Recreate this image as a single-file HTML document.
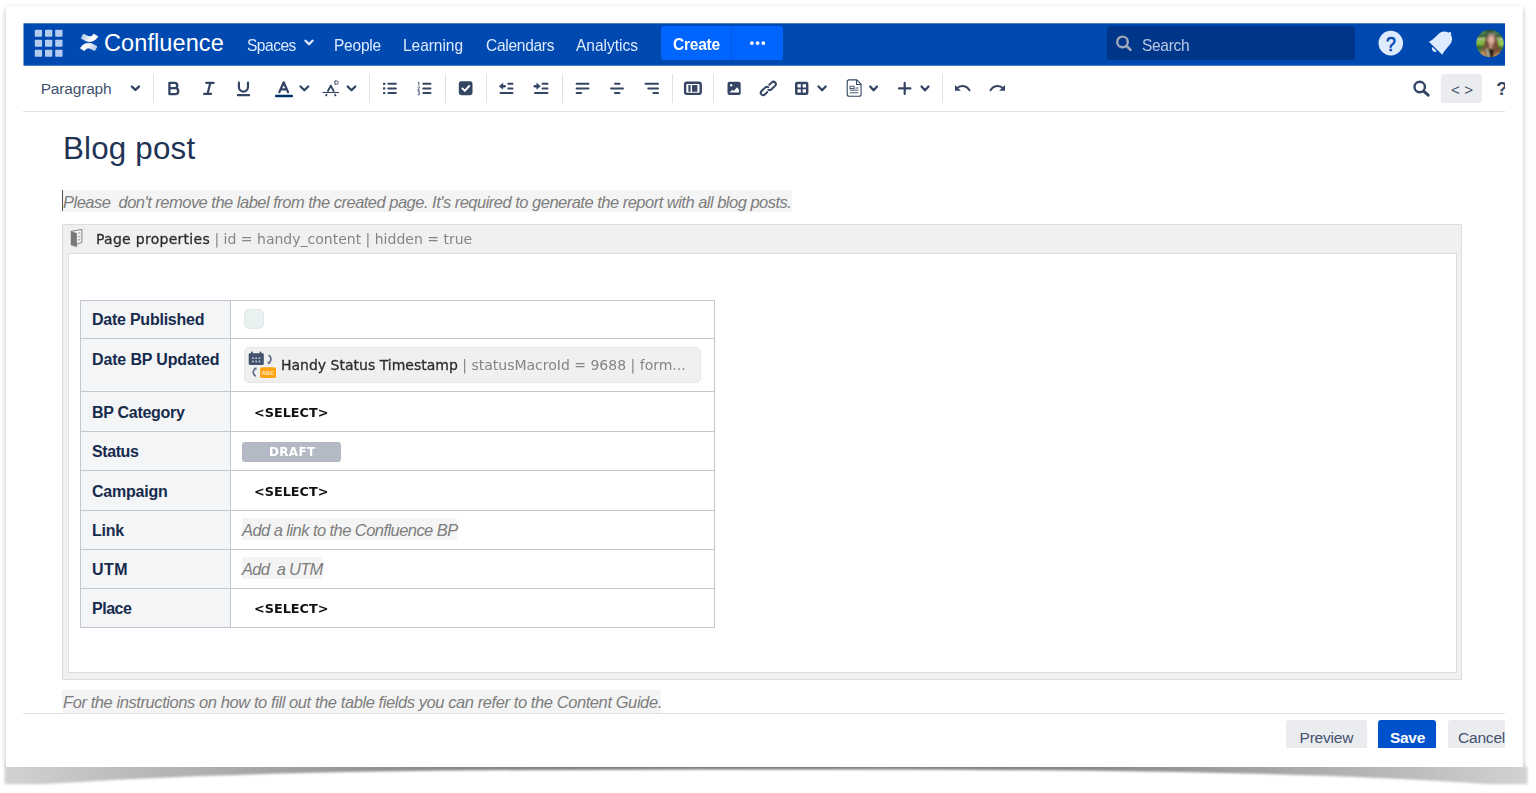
<!DOCTYPE html>
<html lang="en">
<head>
<meta charset="utf-8">
<title>Blog post - Confluence</title>
<style>
html,body{margin:0;padding:0;background:#fff;}
body{width:1536px;height:793px;overflow:hidden;position:relative;font-family:"Liberation Sans",sans-serif;color:#172b4d;}
.abs{position:absolute;}
#card{position:absolute;left:6px;top:6px;width:1517px;height:761px;background:#fff;box-shadow:0 2px 5px rgba(0,0,0,.27);clip-path:inset(-10px -10px 0 -10px);}
#curve{position:absolute;left:0;top:760px;width:1536px;height:33px;}
#shot{position:absolute;left:23px;top:23px;width:1482px;height:725px;overflow:hidden;background:#fff;}
#pg{position:absolute;left:-23px;top:-23px;width:1536px;height:793px;}
#pg *{box-sizing:border-box;}
#pg div,#pg span,#pg svg{position:absolute;white-space:nowrap;}
/* nav */
#nav{left:23px;top:23px;width:1482px;height:42px;background:#0049b0;}
.nv{color:#deebff;font-size:17px;top:35.5px;line-height:20px;transform:scaleX(.912);transform-origin:0 50%;}
/* toolbar */
#tbline{left:23px;top:111px;width:1482px;height:1px;background:#dfe1e6;}
.sep{width:1px;top:74px;height:29px;background:#dfe1e6;}
.ic{fill:none;stroke:#344563;stroke-width:2;}
/* content */
.ph{color:#7d7d7d;font-style:italic;font-size:16px;line-height:22px;background:#f4f5f7;letter-spacing:-0.27px;}
.th{left:80px;width:151px;background:#f4f5f7;border:1px solid #c1c7d0;border-right:none;border-bottom:none;}
.td{left:230px;width:485px;border:1px solid #c1c7d0;border-bottom:none;}
.hr{left:80px;width:635px;height:1px;background:#c1c7d0;}
.thl{font-weight:bold;font-size:16px;left:92px;color:#172b4d;line-height:20px;letter-spacing:-0.35px;}
.sel{font-family:"DejaVu Sans",sans-serif;font-weight:bold;font-size:12.8px;color:#111;left:253.7px;line-height:16px;will-change:transform;}
</style>
</head>
<body>
<svg id="curve" viewBox="0 760 1536 33"><defs><linearGradient id="cg" x1="5" x2="1527" y1="0" y2="0" gradientUnits="userSpaceOnUse"><stop offset="0" stop-color="#d2d2d2"/><stop offset="0.1" stop-color="#b6b6b6"/><stop offset="0.3" stop-color="#858585"/><stop offset="0.5" stop-color="#7a7a7a"/><stop offset="0.7" stop-color="#858585"/><stop offset="0.9" stop-color="#b6b6b6"/><stop offset="1" stop-color="#d2d2d2"/></linearGradient><filter id="cb" x="-1%" y="-50%" width="102%" height="200%"><feGaussianBlur stdDeviation="1.3"/></filter></defs><path d="M6 762 H1522.500 V766.500 H1527.500 V784.300 H1490 C1300 770.500 1032 769.400 766 769.400 S232 770.500 42 784.300 H4.500 V766.500 H6 Z" fill="url(#cg)" filter="url(#cb)"/></svg>
<div id="card"></div>
<div id="shot"><div id="pg">

<!-- NAV -->
<svg style="left:20px;top:20px;width:1490px;height:50px" viewBox="20 20 1490 50"><rect x="23.500" y="23.300" width="1481.700" height="42.400" fill="#0049b0"/></svg>
<svg style="left:34px;top:29px;width:30px;height:29px" viewBox="0 0 30 29"><g fill="#b3cbef">
<rect x="0.8" y="0.8" width="7.3" height="7" rx="0.8"/><rect x="11" y="0.8" width="7.3" height="7" rx="0.8"/><rect x="21.2" y="0.8" width="7.3" height="7" rx="0.8"/>
<rect x="0.8" y="10.8" width="7.3" height="7" rx="0.8"/><rect x="11" y="10.8" width="7.3" height="7" rx="0.8"/><rect x="21.2" y="10.8" width="7.3" height="7" rx="0.8"/>
<rect x="0.8" y="20.8" width="7.3" height="7" rx="0.8"/><rect x="11" y="20.8" width="7.3" height="7" rx="0.8"/><rect x="21.2" y="20.8" width="7.3" height="7" rx="0.8"/></g></svg>
<svg style="left:74px;top:28px;width:32px;height:30px" viewBox="74 28 32 30"><defs><linearGradient id="lg1" x1="80.500" y1="35" x2="91" y2="39.500" gradientUnits="userSpaceOnUse"><stop offset="0" stop-color="#fff" stop-opacity=".62"/><stop offset="1" stop-color="#fff"/></linearGradient></defs>
<path id="rb" fill="url(#lg1)" stroke="url(#lg1)" stroke-width=".7" stroke-linejoin="round" d="M83.500 34.100 C85.500 35.200 88 36.700 90 36.700 C91.700 36.700 92.800 35.400 93.700 34.100 L97.800 36.500 C96.700 38.500 94 41.600 89.500 41.600 C86.500 41.600 83.500 39.600 81.200 38.300 Z"/>
<use href="#rb" transform="rotate(180 89.100 42.400)"/></svg>
<span style="left:104px;top:28px;font-size:23.5px;line-height:30px;color:#fff;letter-spacing:0.1px">Confluence</span>
<span class="nv" style="left:246.7px;letter-spacing:-0.52px">Spaces</span>
<svg style="left:304px;top:39px;width:10px;height:8px" viewBox="0 0 10 8"><path d="M1.500 1.800 L5 5.200 L8.500 1.800" fill="none" stroke="#deebff" stroke-width="2.300" stroke-linecap="round" stroke-linejoin="round"/></svg>
<span class="nv" style="left:333.5px;letter-spacing:-0.25px">People</span>
<span class="nv" style="left:403.3px;letter-spacing:-0.05px">Learning</span>
<span class="nv" style="left:485.8px;letter-spacing:-0.30px">Calendars</span>
<span class="nv" style="left:576.4px;letter-spacing:0.00px">Analytics</span>
<div style="left:661px;top:26px;width:70.3px;height:34px;background:#0065ff;border-radius:3px 0 0 3px"></div>
<div style="left:731px;top:26px;width:51.700px;height:34px;background:#0065ff;border-radius:0 3px 3px 0;border-left:1px solid #0058de"></div>
<span class="nv" style="left:673px;top:34.900px;font-weight:bold;color:#fff;letter-spacing:-0.26px">Create</span>
<svg style="left:749px;top:40px;width:18px;height:6px" viewBox="0 0 18 6"><g fill="#fff"><circle cx="2.900" cy="3.100" r="1.900"/><circle cx="8.600" cy="3.100" r="1.900"/><circle cx="14.300" cy="3.100" r="1.900"/></g></svg>
<div style="left:1106.7px;top:26px;width:248px;height:34px;background:#00368a;border-radius:3px"></div>
<svg style="left:1115px;top:34px;width:18px;height:18px" viewBox="0 0 18 18"><circle cx="7.500" cy="7.900" r="5.300" fill="none" stroke="#9fa8bb" stroke-width="2.400"/><path d="M11.600 12 L15.500 15.900" stroke="#9fa8bb" stroke-width="2.700" stroke-linecap="round"/></svg>
<span class="nv" style="left:1142px;color:#bccae6;letter-spacing:-0.35px">Search</span>
<svg style="left:1376px;top:28px;width:30px;height:30px" viewBox="1376 28 30 30"><circle cx="1390.800" cy="43.100" r="12.300" fill="#deebff"/><text x="0" y="0" transform="translate(1390.800 50.800) scale(0.860 1)" text-anchor="middle" font-family="Liberation Sans, sans-serif" font-size="20.500" fill="#0049b0" stroke="#0049b0" stroke-width="0.700">?</text></svg>
<svg style="left:1424px;top:26px;width:34px;height:34px" viewBox="1424 26 34 34"><defs><clipPath id="clp"><rect x="-5" y="1.300" width="10" height="6"/></clipPath></defs><g transform="translate(1435.600 48.200) rotate(44) scale(0.970)" fill="#deebff"><path d="M-9.600 0 C-8.600 -3 -8.300 -6 -8.200 -9 L-8 -13 C-7.800 -17.500 -4.500 -21 0 -21 C4.500 -21 7.800 -17.500 8 -13 L8.200 -9 C8.300 -6 8.600 -3 9.600 0 Z"/><rect x="-1.500" y="-22.500" width="3" height="3" rx="1.200"/><circle cx="0" cy="0.900" r="3" clip-path="url(#clp)"/></g></svg>
<svg style="left:1475px;top:29px;width:30px;height:30px" viewBox="-1 -0.800 30 30"><defs><clipPath id="av"><circle cx="14" cy="13.700" r="13.700"/></clipPath><filter id="avb" x="-20%" y="-20%" width="140%" height="140%"><feGaussianBlur stdDeviation="0.8"/></filter></defs><g clip-path="url(#av)"><g filter="url(#avb)"><rect x="-2" y="-2" width="32" height="32" fill="#3d8a35"/><rect x="-2" y="-2" width="32" height="9.500" fill="#2b5536"/><rect x="3" y="1" width="7" height="4" fill="#4f8550"/><rect x="18" y="0" width="6" height="5" fill="#3f7a55"/><rect x="-2" y="8" width="32" height="2.500" fill="#b9c886"/><rect x="-2" y="10.500" width="32" height="5.500" fill="#84b944"/><rect x="20" y="11" width="9" height="5" fill="#9acb55"/><rect x="-2" y="15.500" width="9" height="4.500" fill="#3a6a33"/><rect x="22" y="17" width="8" height="5" fill="#3b7631"/>
<path d="M4.800 21 C8.500 17 8.800 9 11.200 6 C13 3.400 18 3.400 19.600 6 C22 9.500 21.500 14.500 25.300 20.500 C26 23 24 26 22 28.500 L6 28.500 C4.500 26 3.800 23 4.800 21 Z" fill="#6f4c36"/><path d="M12 5.300 C14 3.100 18 3.200 19.500 5.800" stroke="#9a9387" stroke-width="1.500" fill="none"/>
<path d="M4 28.500 C3.800 23.500 5.500 20 9.300 19 L11 28.500 Z" fill="#c89566"/><path d="M25 28.500 C25.300 24 23.500 21.500 19.800 20.800 L17 28.500 Z" fill="#c28c5c"/>
<path d="M7 21 C9 19 9.800 16 10.200 13 L11.500 19 L9 24 Z" fill="#7a553b"/><path d="M22.500 23 C21 20 20.500 17 20 13.500 L18.500 20 L20.500 25 Z" fill="#7a553b"/>
<path d="M9.800 28.500 L10.200 19.500 C12 17.800 16 17.800 17.300 19.800 L16.800 28.500 Z" fill="#12100e"/><path d="M13.200 14 h3.400 v4.500 C15.500 19.500 14 19.500 13.200 18.500 z" fill="#c6957b"/>
<ellipse cx="15.200" cy="9.900" rx="3.200" ry="4.400" fill="#e0b3a2"/><ellipse cx="15" cy="12.100" rx="1.200" ry=".6" fill="#d48a8a"/>
<path d="M10 19 L11.700 18.700 L14 28.500 L11.800 28.500 Z" fill="#d8cfab"/></g></g></svg>

<!-- TOOLBAR -->
<div id="tbline"></div>
<span style="left:40.700px;top:78.500px;font-size:15.500px;line-height:20px;color:#42526e;letter-spacing:-0.18px">Paragraph</span>
<svg style="left:130px;top:84px;width:11px;height:9px" viewBox="0 0 11 9"><path d="M1.900 2.600 L5.400 5.900 L8.900 2.600" fill="none" stroke="#344563" stroke-width="2.400" stroke-linecap="round" stroke-linejoin="round"/></svg>
<div class="sep" style="left:153px"></div>
<svg id="tbicons" style="left:0;top:68px;width:1536px;height:40px" viewBox="0 68 1536 40">
<path d="M169.400 82.800 V94.100 M169.400 82.800 H174.600 a2.700 2.700 0 0 1 0 5.400 H169.400 M169.400 88.200 H175.300 a2.950 2.950 0 0 1 0 5.900 H169.400" fill="none" stroke="#344563" stroke-width="2.300" stroke-linejoin="round" stroke-linecap="round"/>
<path d="M206.300 82.900 H213.600 M204.100 93.900 H211 M210.300 82.900 L207.500 93.900" stroke="#344563" stroke-width="2.200" stroke-linecap="round" fill="none"/>
<path d="M238.900 82.500 V87 a4.550 4.550 0 0 0 9.100 0 V82.500" stroke="#344563" stroke-width="2.200" stroke-linecap="round" fill="none"/><path d="M237.900 95.200 L249.100 95.200" stroke="#344563" stroke-width="2.200" stroke-linecap="round"/>
<path d="M279.300 92.200 L283.700 82.300 L288.100 92.200 M281 89.300 H286.400" stroke="#344563" stroke-width="2.200" stroke-linecap="round" stroke-linejoin="round" fill="none"/>
<rect x="275" y="94.700" width="18" height="2.600" rx="1" fill="#003366"/>
<path d="M300.5 86.500 L304.4 90.300 L308.2 86.500" fill="none" stroke="#344563" stroke-width="2.300" stroke-linecap="round" stroke-linejoin="round"/>
<path d="M327.600 91.600 L330.800 85.600 L334 91.600" stroke="#344563" stroke-width="1.900" stroke-linejoin="round" fill="none"/>
<path d="M325.800 96 L326.900 94.100 M334.700 94.100 L335.800 96" stroke="#344563" stroke-width="1.800" fill="none"/>
<path d="M322.500 92.500 H339" stroke="#344563" stroke-width="1.100"/>
<path d="M334.900 80.900 V84.300 M334.900 80.900 h1.500 a1.700 1.700 0 0 1 0 3.400 h-1.500" stroke="#344563" stroke-width="1" fill="none"/>
<path d="M347.7 86.500 L351.5 90.300 L355.3 86.500" fill="none" stroke="#344563" stroke-width="2.300" stroke-linecap="round" stroke-linejoin="round"/>
<rect x="383" y="82.7" width="2.300" height="2.200" rx="0.600" fill="#344563"/>
<path d="M388.3 83.8 L395.9 83.8" stroke="#344563" stroke-width="2" stroke-linecap="round"/>
<rect x="383" y="87.30000000000001" width="2.300" height="2.200" rx="0.600" fill="#344563"/>
<path d="M388.3 88.4 L395.9 88.4" stroke="#344563" stroke-width="2" stroke-linecap="round"/>
<rect x="383" y="91.9" width="2.300" height="2.200" rx="0.600" fill="#344563"/>
<path d="M388.3 93 L395.9 93" stroke="#344563" stroke-width="2" stroke-linecap="round"/>
<path d="M423.3 83.8 L430.5 83.8" stroke="#344563" stroke-width="2" stroke-linecap="round"/>
<path d="M423.3 88.4 L430.5 88.4" stroke="#344563" stroke-width="2" stroke-linecap="round"/>
<path d="M423.3 93 L430.5 93" stroke="#344563" stroke-width="2" stroke-linecap="round"/>
<g fill="none" stroke="#344563" stroke-width="0.900"><path d="M417.900 82.700 L418.900 82.200 V85.500"/><path d="M417.700 87.300 C418.200 86.500 419.700 86.600 419.600 87.600 C419.500 88.500 417.800 89.200 417.700 90.100 H419.800"/><path d="M417.700 91.700 C418.300 91 419.700 91.200 419.600 92.100 C419.500 92.900 418.600 93 418.600 93 C418.600 93 419.700 93.100 419.700 94 C419.700 95 418.200 95.200 417.600 94.400"/></g>
<rect x="458.800" y="81.300" width="13.700" height="13.900" rx="2.400" fill="#344563"/><path d="M462.300 88.400 L464.800 90.900 L469.200 86" stroke="#fff" stroke-width="1.900" fill="none" stroke-linecap="round" stroke-linejoin="round"/>
<path d="M508.3 83.8 L512.5 83.8" stroke="#344563" stroke-width="2" stroke-linecap="round"/><path d="M508.3 88.4 L512.5 88.4" stroke="#344563" stroke-width="2" stroke-linecap="round"/><path d="M500.5 93 L512.5 93" stroke="#344563" stroke-width="2" stroke-linecap="round"/>
<path d="M501.500 86.200 H504.600" stroke="#344563" stroke-width="2.400" stroke-linecap="round"/><path d="M499.300 86.200 L502.800 83.200 V89.200 Z" fill="#344563" stroke="#344563" stroke-width=".6" stroke-linejoin="round"/>
<path d="M542.5 83.8 L547.5 83.8" stroke="#344563" stroke-width="2" stroke-linecap="round"/><path d="M542.5 88.4 L547.5 88.4" stroke="#344563" stroke-width="2" stroke-linecap="round"/><path d="M535.0 93 L547.5 93" stroke="#344563" stroke-width="2" stroke-linecap="round"/>
<path d="M534.800 86.200 H537.500" stroke="#344563" stroke-width="2.400" stroke-linecap="round"/><path d="M540.300 86.200 L536.800 83.200 V89.200 Z" fill="#344563" stroke="#344563" stroke-width=".6" stroke-linejoin="round"/>
<path d="M576.6 83.8 L588.4 83.8" stroke="#344563" stroke-width="2" stroke-linecap="round"/><path d="M576.6 88.4 L588.4 88.4" stroke="#344563" stroke-width="2" stroke-linecap="round"/><path d="M576.6 93 L581.2 93" stroke="#344563" stroke-width="2" stroke-linecap="round"/>
<path d="M615.0 83.8 L619.5 83.8" stroke="#344563" stroke-width="2" stroke-linecap="round"/><path d="M611.1 88.4 L623.0 88.4" stroke="#344563" stroke-width="2" stroke-linecap="round"/><path d="M615.0 93 L619.5 93" stroke="#344563" stroke-width="2" stroke-linecap="round"/>
<path d="M645.5 83.8 L658.0 83.8" stroke="#344563" stroke-width="2" stroke-linecap="round"/><path d="M648.3 88.4 L658.0 88.4" stroke="#344563" stroke-width="2" stroke-linecap="round"/><path d="M653.3 93 L658.0 93" stroke="#344563" stroke-width="2" stroke-linecap="round"/>
<rect x="685.100" y="82.700" width="15.600" height="11.200" rx="1.800" fill="none" stroke="#344563" stroke-width="2.400"/><rect x="688.400" y="85.100" width="2.200" height="6.700" rx=".5" fill="#344563"/><rect x="692" y="85.100" width="5.400" height="6.700" rx=".5" fill="#344563"/>
<rect x="727.500" y="81.700" width="13.200" height="13.300" rx="2" fill="#344563"/><circle cx="731.200" cy="85.300" r="1.200" fill="#fff"/><path d="M729.500 92.600 L732.300 89.700 L733.800 91 L737 87.200 L738.900 89.500 V92.600 Z" fill="#fff"/>
<g fill="none" stroke="#344563" stroke-width="2" stroke-linecap="round"><path id="lk" transform="translate(771.500 85.900) rotate(-43)" d="M-0.800 -2.400 H2.600 a2.400 2.400 0 0 1 0 4.800 H-2.600 a2.400 2.400 0 0 1 -2.300 -1.700"/><use href="#lk" transform="rotate(180 768.300 88.400)"/></g>
<rect x="795" y="81.700" width="13.400" height="13.300" rx="2" fill="#344563"/><g fill="#fff"><rect x="797.500" y="84.200" width="3.300" height="3.300"/><rect x="802.700" y="84.200" width="3.300" height="3.300"/><rect x="797.500" y="89.300" width="3.300" height="3.300"/><rect x="802.700" y="89.300" width="3.300" height="3.300"/></g>
<path d="M818.5 86.500 L822.1 90.300 L825.7 86.500" fill="none" stroke="#344563" stroke-width="2.300" stroke-linecap="round" stroke-linejoin="round"/>
<path d="M849.200 79.900 H856.800 L861.100 84.200 V94.200 a2 2 0 0 1 -2 2 H849.200 a2 2 0 0 1 -2 -2 V81.900 a2 2 0 0 1 2 -2 Z M856.600 80.200 V84.500 H860.900" fill="none" stroke="#344563" stroke-width="1.100" stroke-linejoin="round"/><path d="M849.800 90.200 H858.400 M849.800 92.800 H858.400 M855.300 88 H858.400" stroke="#344563" stroke-width="0.900"/><rect x="850" y="86.200" width="4" height="2.400" fill="none" stroke="#344563" stroke-width="0.900"/>
<path d="M870.2 86.500 L873.6 90.300 L877.0 86.500" fill="none" stroke="#344563" stroke-width="2.300" stroke-linecap="round" stroke-linejoin="round"/>
<path d="M899 88.400 H910.400 M904.700 82.900 V94" stroke="#344563" stroke-width="2.200" stroke-linecap="round"/>
<path d="M921.5 86.500 L925.0 90.300 L928.5 86.500" fill="none" stroke="#344563" stroke-width="2.300" stroke-linecap="round" stroke-linejoin="round"/>
<path d="M956.300 88.800 C960.500 84.800 966 85 969.500 90.300" fill="none" stroke="#344563" stroke-width="2" stroke-linecap="round"/><path d="M955 85 V90.800 H960.800 Z" fill="#344563"/>
<path d="M1003.700 88.800 C999.500 84.800 994 85 990.500 90.300" fill="none" stroke="#344563" stroke-width="2" stroke-linecap="round"/><path d="M1005 85 V90.800 H999.200 Z" fill="#344563"/>
<circle cx="1419.700" cy="87" r="5.200" fill="none" stroke="#344563" stroke-width="2.400"/><path d="M1423.900 91.300 L1428.200 95.200" stroke="#344563" stroke-width="3" stroke-linecap="round"/>
</svg>
<div class="sep" style="left:369px"></div>
<div class="sep" style="left:445px"></div>
<div class="sep" style="left:486px"></div>
<div class="sep" style="left:562px"></div>
<div class="sep" style="left:672px"></div>
<div class="sep" style="left:713px"></div>
<div class="sep" style="left:942px"></div>
<div style="left:1441.300px;top:74px;width:40.400px;height:28.700px;background:#ebecf0;border-radius:3px"></div>
<span style="left:1451px;top:79.700px;font-size:15px;line-height:20px;color:#42526e;letter-spacing:4.500px">&lt;&gt;</span>
<span style="left:1496.300px;top:78.600px;font-size:18.500px;font-weight:bold;line-height:20px;color:#344563">?</span>

<!-- CONTENT -->
<span style="left:63px;top:129.300px;font-size:31.300px;line-height:40px;color:#1f3354;letter-spacing:0.2px">Blog post</span>
<div style="left:62px;top:190px;width:730px;height:22px;background:#f4f4f4"></div>
<span class="ph" style="left:63px;top:191px;background:none;font-size:16.500px;letter-spacing:-0.51px;white-space:pre">Please  don't remove the label from the created page. It's required to generate the report with all blog posts.</span>
<div style="left:62px;top:190px;width:1px;height:21px;background:#555"></div>
<!-- page properties macro -->
<div style="left:62px;top:224px;width:1400px;height:455.500px;background:#f0f0f0;border:1px solid #ddd"></div>
<div style="left:68px;top:253px;width:1389px;height:420px;background:#fff;border:1px solid #ddd"></div>
<svg style="left:68px;top:226px;width:18px;height:24px" viewBox="68 226 18 24"><path d="M71.300 231.300 L81.900 229.400 V242.500 L76.600 244.200 Z" fill="#f3f3f3" stroke="#858585" stroke-width="1" stroke-linejoin="round"/><path d="M71 231.200 L76.700 233.400 V246.800 L71 245.100 Z" fill="#787878" stroke="#787878" stroke-width=".5" stroke-linejoin="round"/><path d="M78.400 233.300 L80.300 232.900 M78.400 236.600 L80.300 236.300 M78.400 239.900 L80.300 239.600" stroke="#9a9a9a" stroke-width="1.100"/></svg>
<span style="left:95.500px;top:230.500px;font-family:'DejaVu Sans',sans-serif;font-size:14px;line-height:16px;color:#858585;will-change:transform"><b style="color:#2b2b2b;font-weight:normal;-webkit-text-stroke:0.28px #2f2f2f;letter-spacing:0.28px">Page properties</b> | id = handy_content | hidden = true</span>
<!-- table -->
<div style="left:80px;top:300px;width:635px;height:328px;border:1px solid #c1c7d0;background:#fff"></div>
<div style="left:80px;top:300px;width:151px;height:328px;background:#f4f5f7;border:1px solid #c1c7d0"></div>
<div class="hr" style="top:338px"></div><div class="hr" style="top:391px"></div><div class="hr" style="top:431px"></div><div class="hr" style="top:470px"></div><div class="hr" style="top:510px"></div><div class="hr" style="top:549px"></div><div class="hr" style="top:588px"></div>
<span class="thl" style="top:310px;letter-spacing:-0.24px">Date Published</span>
<span class="thl" style="top:350px;letter-spacing:-0.15px">Date BP Updated</span>
<span class="thl" style="top:403px;letter-spacing:-0.29px">BP Category</span>
<span class="thl" style="top:442px;letter-spacing:-0.42px">Status</span>
<span class="thl" style="top:482px;letter-spacing:-0.22px">Campaign</span>
<span class="thl" style="top:521px;letter-spacing:-0.27px">Link</span>
<span class="thl" style="top:560px;letter-spacing:0.500px">UTM</span>
<span class="thl" style="top:599px;letter-spacing:-0.48px">Place</span>
<div style="left:244px;top:309px;width:20px;height:20px;border-radius:5px;background:#e9f2f0;border:1px solid #e3e6ea"></div>
<div style="left:244px;top:347px;width:457px;height:36px;border-radius:5px;background:#f0f0f0;border:1px solid #e6e6e6"></div>
<span style="left:281px;top:357px;font-family:'DejaVu Sans',sans-serif;font-size:14px;line-height:16px;color:#858585;will-change:transform"><b style="color:#2b2b2b;font-weight:normal;-webkit-text-stroke:0.28px #2f2f2f">Handy Status Timestamp</b> | statusMacroId = 9688 | form...</span>
<svg style="left:246px;top:349px;width:32px;height:32px" viewBox="246 349 32 32"><g fill="#42526e"><rect x="248.700" y="353.200" width="15.100" height="11.700" rx="1.300"/><rect x="251" y="351.600" width="1.800" height="3.400" rx=".8"/><rect x="259.600" y="351.600" width="1.800" height="3.400" rx=".8"/></g>
<g fill="#c5cbd6"><rect x="252" y="357.300" width="1.700" height="1.700"/><rect x="255.300" y="357.300" width="1.700" height="1.700"/><rect x="258.600" y="357.300" width="1.700" height="1.700"/><rect x="252" y="360.600" width="1.700" height="1.700"/><rect x="255.300" y="360.600" width="1.700" height="1.700"/><rect x="258.600" y="360.600" width="1.700" height="1.700"/></g>
<path d="M268.600 355.200 C271.600 357 271.800 360.500 269.300 362.700" fill="none" stroke="#5e6c84" stroke-width="1.700"/><path d="M267.600 361.300 L271 363.200 L268 364.300 Z" fill="#5e6c84"/>
<path d="M255.800 376.300 C252.600 374.500 252.400 371 255 368.800" fill="none" stroke="#5e6c84" stroke-width="1.700"/><path d="M256.600 370.200 L253.300 368.300 L256.300 367.200 Z" fill="#5e6c84"/>
<rect x="260.100" y="367.300" width="15.900" height="10.800" rx="1.600" fill="#ffa20f"/><text x="268.100" y="375" text-anchor="middle" font-family="Liberation Sans, sans-serif" font-weight="bold" font-size="5.800" fill="#ffe9c4">ABC</text></svg>
<span class="sel" style="top:404.500px">&lt;SELECT&gt;</span>
<div style="left:242px;top:442px;width:99px;height:20px;border-radius:3px;background:#b3bac5"></div>
<span style="left:268.500px;top:444.500px;font-family:'DejaVu Sans',sans-serif;font-weight:bold;font-size:12px;line-height:14px;color:#fff;letter-spacing:0.300px;will-change:transform">DRAFT</span>
<span class="sel" style="top:483.500px">&lt;SELECT&gt;</span>
<div style="left:241.500px;top:518px;width:215.500px;height:22px;background:#f4f4f4"></div>
<span class="ph" style="left:242px;top:519px;background:none;font-size:16.500px;letter-spacing:-0.56px">Add a link to the Confluence BP</span>
<div style="left:241.500px;top:557px;width:81.500px;height:22px;background:#f4f4f4"></div>
<span class="ph" style="left:242px;top:558px;background:none;font-size:16.500px;letter-spacing:-0.75px;white-space:pre">Add  a UTM</span>
<span class="sel" style="top:600.500px">&lt;SELECT&gt;</span>
<!-- bottom -->
<div style="left:62px;top:690px;width:599px;height:23px;background:#f4f4f4"></div>
<span class="ph" style="left:63px;top:691px;background:none;font-size:16.500px;letter-spacing:-0.42px">For the instructions on how to fill out the table fields you can refer to the Content Guide.</span>
<div style="left:23px;top:713px;width:1482px;height:1px;background:#dfe1e6"></div>
<div style="left:1286px;top:720px;width:81px;height:34px;border-radius:3px;background:#ebecf0"></div>
<span style="left:1299.500px;top:727.500px;font-size:15.500px;line-height:20px;color:#42526e;letter-spacing:-0.2px">Preview</span>
<div style="left:1378px;top:720px;width:58px;height:34px;border-radius:3px;background:#0052cc"></div>
<span style="left:1390px;top:727.500px;font-size:15.500px;font-weight:bold;line-height:20px;color:#fff;letter-spacing:-0.3px">Save</span>
<div style="left:1447.500px;top:720px;width:70px;height:34px;border-radius:3px;background:#ebecf0"></div>
<span style="left:1458px;top:727.500px;font-size:15.500px;line-height:20px;color:#42526e;letter-spacing:-0.2px">Cancel</span>

</div></div>
</body>
</html>
